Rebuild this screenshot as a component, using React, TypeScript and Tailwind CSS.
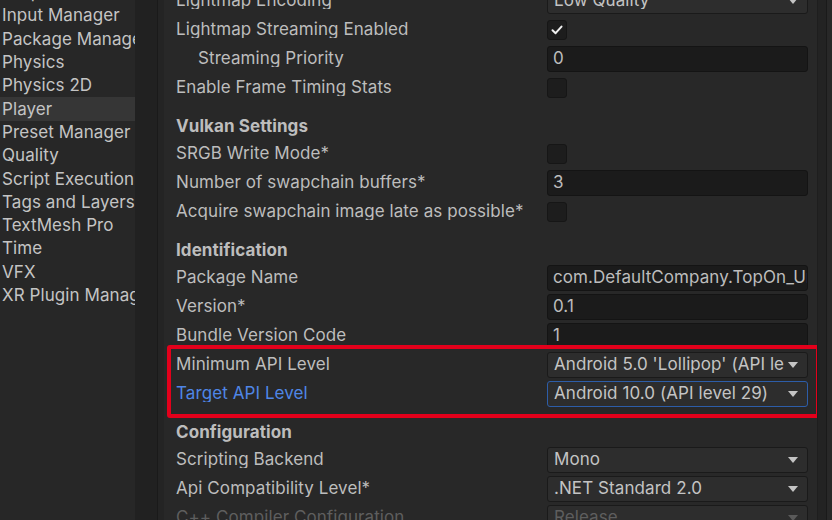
import React from 'react';

type Row =
  | { kind: 'header'; label: string }
  | { kind: 'check'; label: string; checked?: boolean; indent?: boolean }
  | { kind: 'text'; label: string; value: string; indent?: boolean }
  | { kind: 'select'; label: string; value: string; focused?: boolean; disabled?: boolean };

const sidebar = [
  'Graphics',
  'Input Manager',
  'Package Manager',
  'Physics',
  'Physics 2D',
  'Player',
  'Preset Manager',
  'Quality',
  'Script Execution Order',
  'Tags and Layers',
  'TextMesh Pro',
  'Time',
  'VFX',
  'XR Plugin Management',
];

const topRows: Row[] = [
  { kind: 'select', label: 'Lightmap Encoding', value: 'Low Quality' },
  { kind: 'check', label: 'Lightmap Streaming Enabled', checked: true },
  { kind: 'text', label: 'Streaming Priority', value: '0', indent: true },
  { kind: 'check', label: 'Enable Frame Timing Stats' },
  { kind: 'header', label: 'Vulkan Settings' },
  { kind: 'check', label: 'SRGB Write Mode*' },
  { kind: 'text', label: 'Number of swapchain buffers*', value: '3' },
  { kind: 'check', label: 'Acquire swapchain image late as possible*' },
  { kind: 'header', label: 'Identification' },
  { kind: 'text', label: 'Package Name', value: 'com.DefaultCompany.TopOn_Unity' },
  { kind: 'text', label: 'Version*', value: '0.1' },
  { kind: 'text', label: 'Bundle Version Code', value: '1' },
];

const apiRows: Row[] = [
  { kind: 'select', label: 'Minimum API Level', value: "Android 5.0 'Lollipop' (API level 21)" },
  { kind: 'select', label: 'Target API Level', value: 'Android 10.0 (API level 29)', focused: true },
];

const bottomRows: Row[] = [
  { kind: 'header', label: 'Configuration' },
  { kind: 'select', label: 'Scripting Backend', value: 'Mono' },
  { kind: 'select', label: 'Api Compatibility Level*', value: '.NET Standard 2.0' },
  { kind: 'select', label: 'C++ Compiler Configuration', value: 'Release', disabled: true },
];

const Arrow = ({ dim }: { dim?: boolean }) => (
  <svg width="10" height="6" viewBox="0 0 10 6" className="shrink-0">
    <path d="M0 0 H10 L5 6 Z" fill={dim ? '#5a5a5a' : '#c4c4c4'} />
  </svg>
);

const Field = ({ row }: { row: Row }) => {
  if (row.kind === 'check') {
    return (
      <div className="w-5 h-5 rounded-[3px] bg-[#1d1d1d] border border-[#161616] flex items-center justify-center">
        {row.checked && (
          <svg width="12" height="10" viewBox="0 0 12 10">
            <path d="M1.5 5.2 L4.6 8.2 L10.5 1.6" stroke="#f0f0f0" strokeWidth="2" fill="none" strokeLinecap="round" strokeLinejoin="round" />
          </svg>
        )}
      </div>
    );
  }
  if (row.kind === 'text') {
    return (
      <div className="w-[261px] h-[26px] rounded-[3px] bg-[#1b1b1b] border border-[#141414] px-[5px] flex items-center overflow-hidden whitespace-nowrap text-[#bdbdbd]">
        {row.value}
      </div>
    );
  }
  if (row.kind === 'select') {
    const border = row.focused ? 'border-[#2d5da8]' : 'border-[#1a1a1a]';
    const color = row.disabled ? 'text-[#5e5e5e]' : 'text-[#c4c4c4]';
    return (
      <div className={`w-[261px] h-[26px] rounded-[3px] bg-[#2d2d2d] border ${border} pl-[6px] pr-[9px] flex items-center gap-1 ${color}`}>
        <span className="flex-1 overflow-hidden whitespace-nowrap">{row.value}</span>
        <Arrow dim={row.disabled} />
      </div>
    );
  }
  return null;
};

const PropRow = ({ row }: { row: Row }) => {
  if (row.kind === 'header') {
    return (
      <div className="mt-3 h-[25px] flex items-center font-bold text-[#bdbdbd]">{row.label}</div>
    );
  }
  const labelColor =
    row.kind === 'select' && row.focused
      ? 'text-[#4f86e6]'
      : row.kind === 'select' && row.disabled
      ? 'text-[#5e5e5e]'
      : 'text-[#bdbdbd]';
  const indent = 'indent' in row && row.indent ? 'pl-[22px]' : '';
  return (
    <div className="h-[29px] flex items-center">
      <div className={`w-[371px] shrink-0 whitespace-nowrap overflow-hidden ${labelColor} ${indent}`}>{row.label}</div>
      <Field row={row} />
    </div>
  );
};

export default function App() {
  return (
    <div className="w-[832px] h-[520px] overflow-hidden flex bg-[#282828] text-[17px] leading-none tracking-[0.08px] font-['Inter','Noto_Sans',sans-serif]">
      <aside className="w-[135px] shrink-0 bg-[#272727] overflow-hidden">
        <div className="-mt-[19px]">
          {sidebar.map((item) => (
            <div
              key={item}
              className={`h-[23.3px] pl-[2px] flex items-center whitespace-nowrap overflow-hidden text-[#c4c4c4] ${
                item === 'Player' ? 'bg-[#363636]' : ''
              }`}
            >
              {item}
            </div>
          ))}
        </div>
      </aside>
      <div className="w-[22px] shrink-0 bg-[#212121]" />
      <div className="w-px shrink-0 bg-[#1a1a1a]" />
      <div className="w-[6px] shrink-0 bg-[#242424]" />
      <main className="w-[653px] shrink-0 bg-[#282828] pl-3 overflow-hidden">
        <div className="-mt-[14px]">
          {topRows.map((r) => (
            <PropRow key={r.label} row={r} />
          ))}
          <div className="relative">
            {apiRows.map((r) => (
              <PropRow key={r.label} row={r} />
            ))}
            <div className="absolute -left-[9px] -right-[3px] -top-[5px] -bottom-[10px] border-[4.5px] border-[#e3001b] rounded-[3px] pointer-events-none" />
          </div>
          {bottomRows.map((r) => (
            <PropRow key={r.label} row={r} />
          ))}
        </div>
      </main>
      <div className="w-px shrink-0 bg-[#1e1e1e]" />
      <div className="w-[8px] shrink-0 bg-[#232323]" />
      <div className="w-px shrink-0 bg-[#1a1a1a]" />
      <div className="flex-1 bg-[#282828]" />
    </div>
  );
}
